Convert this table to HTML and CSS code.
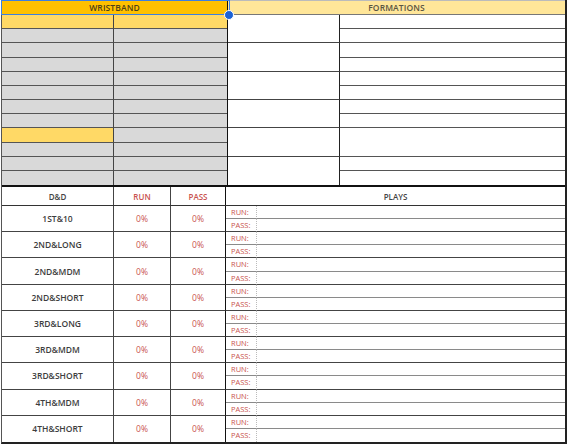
FILE: index.html
```html
<!DOCTYPE html>
<html>
<head>
<meta charset="utf-8">
<link rel="stylesheet" href="styles.css">
</head>
<body>
<div class="sheet">
  <div class="top">
    <div class="wrist">
      <div class="hdr wrist-hdr">WRISTBAND</div>
      <div class="wgrid">
        <div class="c y"></div><div class="c y"></div>
        <div class="c g"></div><div class="c g"></div>
        <div class="c g"></div><div class="c g"></div>
        <div class="c g"></div><div class="c g"></div>
        <div class="c g"></div><div class="c g"></div>
        <div class="c g"></div><div class="c g"></div>
        <div class="c g"></div><div class="c g"></div>
        <div class="c g"></div><div class="c g"></div>
        <div class="c y"></div><div class="c g"></div>
        <div class="c g"></div><div class="c g"></div>
        <div class="c g"></div><div class="c g"></div>
        <div class="c g"></div><div class="c g"></div>
      </div>
    </div>
    <div class="form">
      <div class="hdr form-hdr">FORMATIONS</div>
      <div class="fgrid">
        <div class="fl"></div><div class="fl"></div><div class="fl"></div>
        <div class="fl"></div><div class="fl"></div><div class="fl"></div>
        <div class="fr"></div><div class="fr"></div><div class="fr"></div><div class="fr"></div>
        <div class="fr"></div><div class="fr"></div><div class="fr"></div><div class="fr"></div>
        <div class="fr span2"></div><div class="fr"></div><div class="fr"></div>
      </div>
    </div>
  </div>
  <div class="bottom">
    <div class="bhdr">
      <div class="bh dark">D&amp;D</div>
      <div class="bh red">RUN</div>
      <div class="bh red pass-col">PASS</div>
      <div class="bh dark plays">PLAYS</div>
    </div>
    <div class="bgrid">
      <div class="dd">1ST&amp;10</div>
      <div class="dd">2ND&amp;LONG</div>
      <div class="dd">2ND&amp;MDM</div>
      <div class="dd">2ND&amp;SHORT</div>
      <div class="dd">3RD&amp;LONG</div>
      <div class="dd">3RD&amp;MDM</div>
      <div class="dd">3RD&amp;SHORT</div>
      <div class="dd">4TH&amp;MDM</div>
      <div class="dd">4TH&amp;SHORT</div>

      <div class="pct">0%</div><div class="pct">0%</div><div class="pct">0%</div>
      <div class="pct">0%</div><div class="pct">0%</div><div class="pct">0%</div>
      <div class="pct">0%</div><div class="pct">0%</div><div class="pct">0%</div>

      <div class="pct pass-col">0%</div><div class="pct pass-col">0%</div><div class="pct pass-col">0%</div>
      <div class="pct pass-col">0%</div><div class="pct pass-col">0%</div><div class="pct pass-col">0%</div>
      <div class="pct pass-col">0%</div><div class="pct pass-col">0%</div><div class="pct pass-col">0%</div>

      <div class="lb run">RUN:</div><div class="lb pas">PASS:</div>
      <div class="lb run">RUN:</div><div class="lb pas">PASS:</div>
      <div class="lb run">RUN:</div><div class="lb pas">PASS:</div>
      <div class="lb run">RUN:</div><div class="lb pas">PASS:</div>
      <div class="lb run">RUN:</div><div class="lb pas">PASS:</div>
      <div class="lb run">RUN:</div><div class="lb pas">PASS:</div>
      <div class="lb run">RUN:</div><div class="lb pas">PASS:</div>
      <div class="lb run">RUN:</div><div class="lb pas">PASS:</div>
      <div class="lb run">RUN:</div><div class="lb pas">PASS:</div>

      <div class="pl run"></div><div class="pl pas"></div>
      <div class="pl run"></div><div class="pl pas"></div>
      <div class="pl run"></div><div class="pl pas"></div>
      <div class="pl run"></div><div class="pl pas"></div>
      <div class="pl run"></div><div class="pl pas"></div>
      <div class="pl run"></div><div class="pl pas"></div>
      <div class="pl run"></div><div class="pl pas"></div>
      <div class="pl run"></div><div class="pl pas"></div>
      <div class="pl run"></div><div class="pl pas"></div>
    </div>
  </div>
  <div class="sel"></div>
  <div class="sel-dot"></div>
</div>
</body>
</html>
```

FILE: styles.css
```css
* { box-sizing: border-box; }
html, body { margin: 0; padding: 0; background: #fff; }
body { font-family: "Open Sans", "Liberation Sans", sans-serif; }

.sheet {
  position: relative;
  width: 566px;
  height: 444px;
  margin-left: 1px;
  border-left: 1px solid #555;
  border-right: 2px solid #222;
  border-bottom: 2px solid #222;
  display: flex;
  flex-direction: column;
}

.top {
  height: 187px;
  display: flex;
  border-bottom: 2px solid #111;
}

.hdr {
  height: 15px;
  display: flex;
  align-items: center;
  justify-content: center;
  font-size: 8.5px;
  font-weight: 600;
  letter-spacing: 0.1px;
  border-bottom: 1px solid #777;
}

.wrist { width: 226px; display: flex; flex-direction: column; border-right: 1px solid #111; }
.wrist-hdr { background: #ffc000; color: #4f4216; }
.wgrid {
  flex: 1;
  display: grid;
  grid-template-columns: 112px 1fr;
  grid-template-rows: repeat(12, 1fr);
}
.c { border-bottom: 1px solid #555; }
.c:nth-child(odd) { border-right: 1px solid #444; }
.c.y { background: #ffd966; }
.c.g { background: #d9d9d9; }

.form { flex: 1; display: flex; flex-direction: column; }
.form-hdr { background: #ffe699; color: #5a5542; border-top: 1px solid #bbb; }
.fgrid {
  flex: 1;
  display: grid;
  grid-template-columns: 112px 1fr;
  grid-template-rows: repeat(12, 1fr);
  grid-auto-flow: column;
}
.fl { grid-row: span 2; border-right: 1px solid #222; border-bottom: 1px solid #444; }
.fr { border-bottom: 1px solid #555; }
.fr.span2 { grid-row: span 2; }
.fl:nth-child(6), .fr:last-child { border-bottom: none; }
.c:nth-last-child(-n+2) { border-bottom: none; }

.bottom { flex: 1; display: flex; flex-direction: column; }
.bhdr {
  height: 19px;
  display: grid;
  grid-template-columns: 112px 57px 55px 1fr;
  border-bottom: 1px solid #333;
}
.bh {
  display: flex;
  align-items: center;
  justify-content: center;
  font-size: 8px;
  font-weight: 600;
  border-right: 1px solid #444;
}
.bh.plays { border-right: none; }
.dark { color: #444; }
.red { color: #c9534f; }
.pass-col { border-right-color: #111 !important; }

.bgrid {
  flex: 1;
  display: grid;
  grid-template-columns: 112px 57px 55px 31px 1fr;
  grid-template-rows: repeat(18, 1fr);
  grid-auto-flow: column;
}
.dd, .pct {
  grid-row: span 2;
  display: flex;
  align-items: center;
  justify-content: center;
  font-size: 8.5px;
  font-weight: 600;
  border-right: 1px solid #444;
  border-bottom: 1px solid #444;
}
.dd { color: #3d3d3d; }
.pct { color: #c9534f; font-weight: 400; font-size: 8.5px; }
.pct.pass-col { border-right: 1px solid #111; }
.dd:nth-child(9), .pct:nth-child(18), .pct:nth-child(27) { border-bottom: none; }

.lb {
  display: flex;
  align-items: center;
  padding-left: 5px;
  font-size: 7.5px;
  color: #c9534f;
  border-right: 1px dotted #bbb;
}
.run { border-bottom: 1px solid #8a8a8a; }
.pas { border-bottom: 1px solid #444; }
.lb.pas:nth-child(45), .pl.pas:last-child { border-bottom: none; }

.sel {
  position: absolute;
  left: -1px;
  top: 0;
  width: 229px;
  height: 15px;
  border: 1px solid #3d7fe0;
  pointer-events: none;
}
.sel-dot {
  position: absolute;
  left: 222px;
  top: 10px;
  width: 10px;
  height: 10px;
  border-radius: 50%;
  background: #1a62d6;
  border: 1px solid #fff;
}
```
